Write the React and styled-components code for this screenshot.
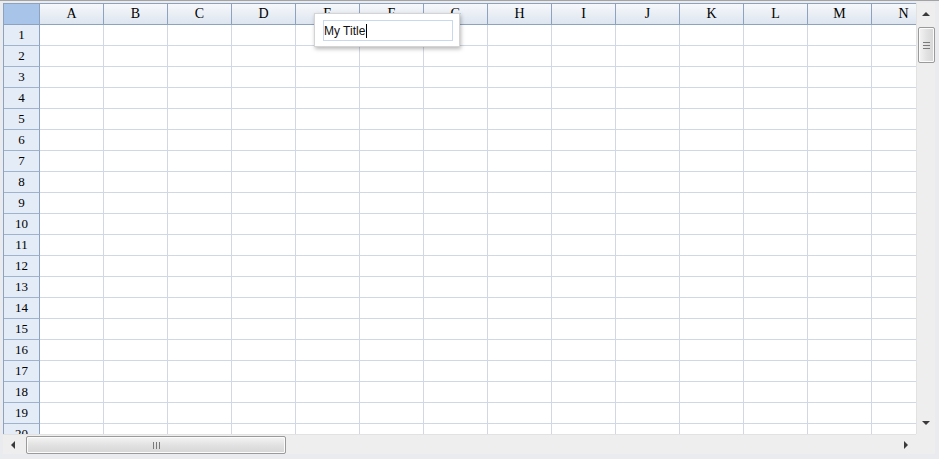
import React from "react";
import styled, { createGlobalStyle } from "styled-components";

const GlobalStyle = createGlobalStyle`
    html, body {
        margin: 0;
        padding: 0;
        background: #ececec;
    }
`;

const COLUMNS = "ABCDEFGHIJKLMN".split("");
const ROWS = Array.from({ length: 20 }, (_, i) => i + 1);

const Frame = styled.div`
    width: 939px;
    height: 459px;
    box-sizing: border-box;
    border-top: 1px solid #a3a3a3;
    padding: 2px 4px 5px 3px;
    background: #e9ebee;
    position: relative;
    overflow: hidden;
`;

const Sheet = styled.div`
    display: grid;
    grid-template-columns: 913px 19px;
    grid-template-rows: 431px 20px;
    height: 451px;
`;

const Viewport = styled.div`
    overflow: hidden;
    background: #fff;
    border-left: 1px solid #8da2bf;
    border-top: 1px solid #8da2bf;
    box-sizing: border-box;
`;

const Row = styled.div`
    display: flex;
    height: 21px;
    flex-shrink: 0;
`;

const Corner = styled.div`
    width: 35px;
    flex-shrink: 0;
    background: #a9c4e9;
    border-right: 1px solid #8da2bf;
    border-bottom: 1px solid #8da2bf;
`;

const ColHeader = styled.div`
    width: 63px;
    flex-shrink: 0;
    display: flex;
    align-items: center;
    justify-content: center;
    background: linear-gradient(#f6f8fb, #dde5ef);
    border-right: 1px solid #8da2bf;
    border-bottom: 1px solid #8da2bf;
    font-family: "Liberation Serif", "Times New Roman", serif;
    font-size: 14px;
    color: #000;
`;

const RowHeader = styled.div`
    width: 35px;
    flex-shrink: 0;
    display: flex;
    align-items: center;
    justify-content: center;
    background: #e4ecf7;
    border-right: 1px solid #8da2bf;
    border-bottom: 1px solid #9fb3cc;
    font-family: "Liberation Serif", "Times New Roman", serif;
    font-size: 13px;
    color: #000;
`;

const Cell = styled.div`
    width: 63px;
    flex-shrink: 0;
    background: #fff;
    border-right: 1px solid #d0d7e5;
    border-bottom: 1px solid #d0d7e5;
`;

const VScroll = styled.div`
    display: flex;
    flex-direction: column;
    background: #eeeeee;
    border-left: 1px solid #e2e2e2;
`;

const HScroll = styled.div`
    display: flex;
    align-items: stretch;
    background: #eeeeee;
    border-top: 1px solid #e2e2e2;
`;

const ScrollCorner = styled.div`
    background: #eeeeee;
`;

const ArrowBox = styled.div`
    display: flex;
    align-items: center;
    justify-content: center;
    flex-shrink: 0;
    width: ${(p) => (p.$vertical ? "auto" : "20px")};
    height: ${(p) => (p.$vertical ? "22px" : "auto")};
`;

const Arrow = styled.div`
    width: 0;
    height: 0;
    ${(p) =>
        p.$dir === "up" &&
        `border-left: 4px solid transparent; border-right: 4px solid transparent; border-bottom: 4px solid #3a3a3a;`}
    ${(p) =>
        p.$dir === "down" &&
        `border-left: 4px solid transparent; border-right: 4px solid transparent; border-top: 4px solid #3a3a3a;`}
    ${(p) =>
        p.$dir === "left" &&
        `border-top: 4px solid transparent; border-bottom: 4px solid transparent; border-right: 4px solid #3a3a3a;`}
    ${(p) =>
        p.$dir === "right" &&
        `border-top: 4px solid transparent; border-bottom: 4px solid transparent; border-left: 4px solid #3a3a3a;`}
`;

const Track = styled.div`
    flex: 1;
    display: flex;
    flex-direction: ${(p) => (p.$vertical ? "column" : "row")};
    padding: ${(p) => (p.$vertical ? "2px 0 0 1px" : "1px 0 0 3px")};
`;

const Thumb = styled.div`
    box-sizing: border-box;
    width: ${(p) => (p.$vertical ? "17px" : "260px")};
    height: ${(p) => (p.$vertical ? "36px" : "18px")};
    border: 1px solid #9a9a9a;
    border-radius: 2px;
    background: ${(p) =>
        p.$vertical
            ? "linear-gradient(90deg, #f4f4f4, #e2e2e2 50%, #d6d6d6)"
            : "linear-gradient(#f4f4f4, #e2e2e2 50%, #d6d6d6)"};
    box-shadow: inset 0 0 0 1px #fbfbfb;
    display: flex;
    flex-direction: ${(p) => (p.$vertical ? "column" : "row")};
    align-items: center;
    justify-content: center;
    gap: 2px;
`;

const Grip = styled.span`
    display: block;
    background: #7a7a7a;
    width: ${(p) => (p.$vertical ? "7px" : "1px")};
    height: ${(p) => (p.$vertical ? "1px" : "7px")};
`;

const Popup = styled.div`
    position: absolute;
    left: 314px;
    top: 12px;
    width: 146px;
    height: 34px;
    box-sizing: border-box;
    padding: 6px 8px;
    background: #fff;
    border: 1px solid #d4d4d4;
    box-shadow: 1px 2px 4px rgba(0, 0, 0, 0.28);
`;

const TitleField = styled.div`
    box-sizing: border-box;
    width: 130px;
    height: 21px;
    border: 1px solid #c9d8ea;
    display: flex;
    align-items: center;
    padding-left: 0;
    font-family: "Liberation Sans", Arial, sans-serif;
    font-size: 12px;
    color: #111;
`;

const Caret = styled.span`
    display: inline-block;
    width: 1px;
    height: 14px;
    margin-left: 1px;
    background: #000;
`;

const Grips = ({ vertical }) => (
    <>
        <Grip $vertical={vertical} />
        <Grip $vertical={vertical} />
        <Grip $vertical={vertical} />
    </>
);

const App = () => {
    return (
        <>
            <GlobalStyle />
            <Frame>
                <Sheet>
                    <Viewport>
                        <Row>
                            <Corner />
                            {COLUMNS.map((c) => (
                                <ColHeader key={c}>{c}</ColHeader>
                            ))}
                        </Row>
                        {ROWS.map((r) => (
                            <Row key={r}>
                                <RowHeader>{r}</RowHeader>
                                {COLUMNS.map((c) => (
                                    <Cell key={c} />
                                ))}
                            </Row>
                        ))}
                    </Viewport>
                    <VScroll>
                        <ArrowBox $vertical>
                            <Arrow $dir="up" />
                        </ArrowBox>
                        <Track $vertical>
                            <Thumb $vertical>
                                <Grips vertical />
                            </Thumb>
                        </Track>
                        <ArrowBox $vertical>
                            <Arrow $dir="down" />
                        </ArrowBox>
                    </VScroll>
                    <HScroll>
                        <ArrowBox>
                            <Arrow $dir="left" />
                        </ArrowBox>
                        <Track>
                            <Thumb>
                                <Grips />
                            </Thumb>
                        </Track>
                        <ArrowBox>
                            <Arrow $dir="right" />
                        </ArrowBox>
                    </HScroll>
                    <ScrollCorner />
                </Sheet>
                <Popup>
                    <TitleField>
                        My Title
                        <Caret />
                    </TitleField>
                </Popup>
            </Frame>
        </>
    );
};

export default App;
